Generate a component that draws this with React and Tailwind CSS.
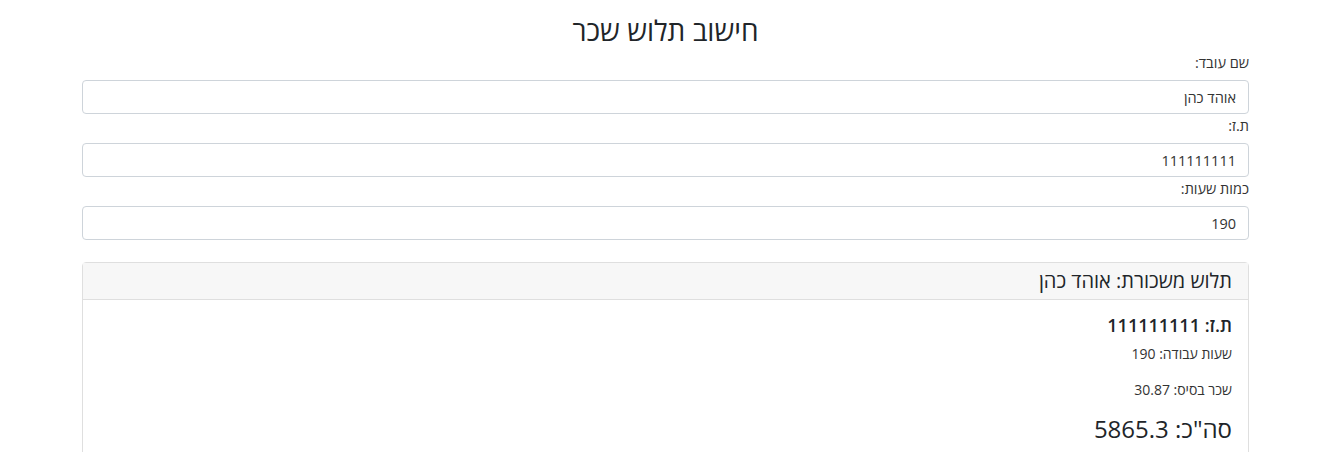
import React from 'react';

const font = { fontFamily: '"Open Sans", "Liberation Sans", "DejaVu Sans", sans-serif' };

const Field = ({ label, value }) => (
  <div>
    <label className="block pt-[2px] pb-[7px] text-[14.5px] leading-[20px] text-[#333]">{label}</label>
    <input
      readOnly
      value={value}
      className="block w-full h-[34px] px-[12px] text-[14.5px] text-[#333] bg-white border border-[#ced4da] rounded-[4px] outline-none"
      dir="rtl"
    />
  </div>
);

export default function App() {
  return (
    <div dir="rtl" className="min-h-[452px] bg-white text-[#212529]" style={font}>
      <div className="ml-[82px] mr-[73px]">
        <h2 className="h-[51px] pt-[10px] text-center text-[28px] leading-[40px] font-medium text-[#212529]">
          חישוב תלוש שכר
        </h2>
        <Field label="שם עובד:" value="אוהד כהן" />
        <Field label="ת.ז:" value="111111111" />
        <Field label="כמות שעות:" value="190" />

        <div className="mt-[22px] border border-[#dfdfdf] rounded-[4px]">
          <div className="h-[37px] px-[16px] bg-[#f7f7f7] border-b border-[#dfdfdf] flex items-center">
            <h4 className="text-[20px] leading-[24px] font-normal text-[#212529]">תלוש משכורת: אוהד כהן</h4>
          </div>
          <div className="px-[16px] pt-[14px] pb-[20px]">
            <h5 className="text-[18px] leading-[22px] font-semibold text-[#212529]">ת.ז: 111111111</h5>
            <p className="mt-[8px] text-[14px] leading-[20px] text-[#333]">שעות עבודה: 190</p>
            <p className="mt-[16px] text-[14px] leading-[20px] text-[#333]">שכר בסיס: 30.87</p>
            <h3 className="mt-[14px] text-[24px] leading-[30px] font-medium text-[#212529]">סה"כ: 5865.3</h3>
          </div>
        </div>
      </div>
    </div>
  );
}
